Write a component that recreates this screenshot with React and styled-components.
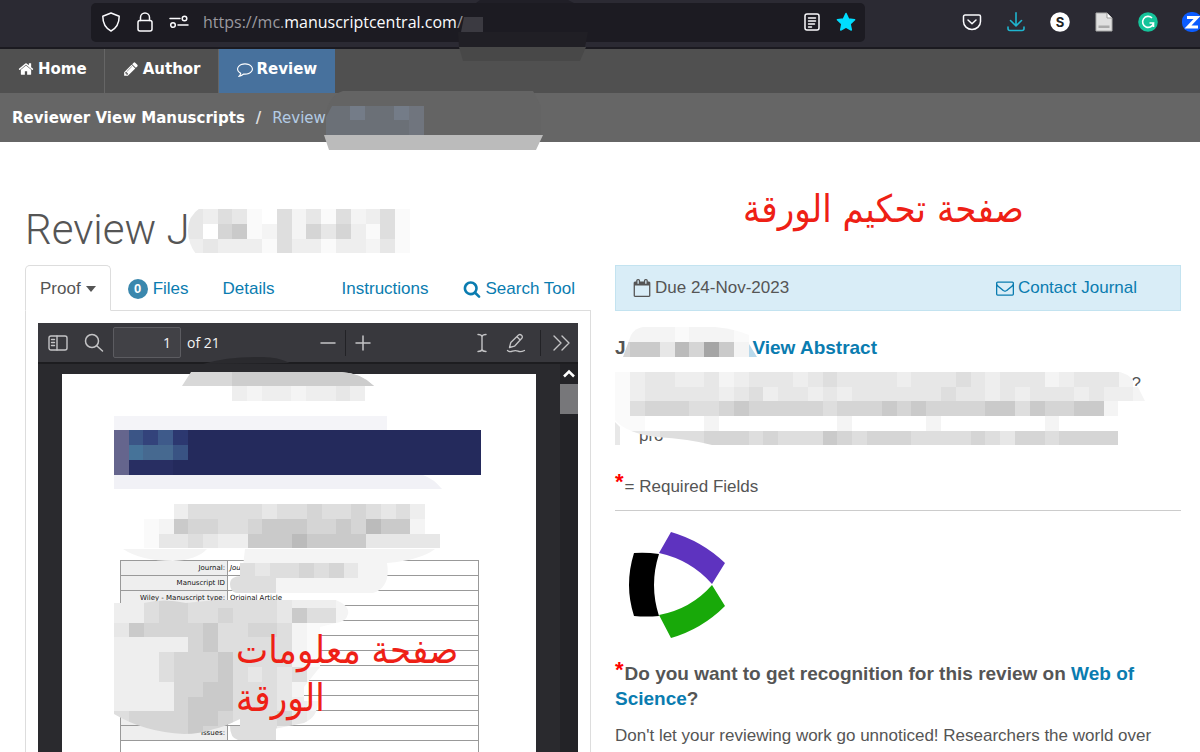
import React from 'react';
import styled, { createGlobalStyle } from 'styled-components';

const GlobalStyle = createGlobalStyle`
  * {
    box-sizing: border-box;
  }

  body {
    margin: 0;
    background: #fff;
    color: #555;
    font-family: 'Liberation Sans', Arial, sans-serif;
    font-size: 17px;
    line-height: 24px;
  }

  a {
    color: #0a7cb0;
    text-decoration: none;
  }

  button {
    padding: 0;
    border: none;
    background: none;
    color: inherit;
    font: inherit;
    cursor: pointer;
  }

  svg {
    display: block;
    flex: none;
  }
`;

const Window = styled.div`
  position: relative;
  height: 100vh;
  overflow: hidden;
`;

/* browser chrome */
const BrowserBar = styled.div`
  display: flex;
  align-items: center;
  justify-content: space-between;
  height: 49px;
  padding: 0 0 3px 91px;
  border-bottom: 2px solid #1b1a20;
  background: #2b2a33;
  color: #fbfbfe;
`;

const AddressBar = styled.div`
  display: flex;
  align-items: center;
  flex: 0 1 774px;
  height: 39px;
  padding: 0 9px 0 10px;
  gap: 14px;
  border-radius: 5px;
  background: #1c1b22;
`;

const Address = styled.div`
  flex: 1;
  color: #9a999f;
  font-family: 'Open Sans', 'Noto Sans', sans-serif;
  font-size: 16px;

  b {
    color: #fbfbfe;
    font-weight: 400;
  }
`;

const Extensions = styled.div`
  display: flex;
  align-items: center;
  gap: 24px;
  margin-right: -2px;
`;

/* site header */
const NavBar = styled.nav`
  display: flex;
  height: 44px;
  background: #505050;
`;

const NavLink = styled.a`
  display: flex;
  align-items: center;
  gap: 4px;
  height: 44px;
  padding: 0 17px 4px 18px;
  border-right: 1px solid ${props => (props.$active ? '#47719d' : '#666')};
  background: ${props => (props.$active ? '#47719d' : 'transparent')};
  color: #fff;
  font-family: 'DejaVu Sans', Verdana, sans-serif;
  font-size: 15px;
  font-weight: 700;
`;

const Breadcrumb = styled.div`
  display: flex;
  align-items: center;
  gap: 11px;
  height: 49px;
  padding-left: 12px;
  background: #666;
  color: #ddd;
  font-family: 'DejaVu Sans', Verdana, sans-serif;
  font-size: 15px;
  font-weight: 700;

  a {
    color: #fff;
  }

  span {
    color: #b3cbe4;
    font-weight: 400;
  }
`;

const Columns = styled.main`
  display: grid;
  grid-template-columns: 1fr 1fr;
  gap: 24px;
  padding: 0 19px 0 25px;
`;

const Column = styled.section`
  position: relative;
  min-width: 0;
  padding-top: ${props => props.$top}px;
`;

const Title = styled.h1`
  height: 60px;
  margin: 0;
  color: #555;
  font-family: Roboto, 'Open Sans', sans-serif;
  font-size: 42px;
  font-weight: 300;
  line-height: 50px;
`;

const Tabs = styled.div`
  display: flex;
  height: 46px;
  border-bottom: 1px solid #ddd;
`;

const Tab = styled.a`
  display: flex;
  align-items: center;
  gap: 5px;
  height: 46px;
  padding: ${props => (props.$active ? '2px 14px 0' : props.$last ? '2px 16px 0 17px' : '2px 17px 0')};
  margin-left: ${props => (props.$push ? 'auto' : '0')};
  border: 1px solid ${props => (props.$active ? '#ddd' : 'transparent')};
  border-bottom-color: ${props => (props.$active ? '#fff' : 'transparent')};
  border-width: ${props => (props.$active ? '1px' : '1px 0')};
  border-radius: 5px 5px 0 0;
  color: ${props => (props.$active ? '#555' : '#0a7cb0')};
`;

const Caret = styled.span`
  border: 5px solid transparent;
  border-top: 6px solid #555;
  border-bottom: 0;
`;

const Badge = styled.span`
  display: grid;
  place-items: center;
  width: 20px;
  height: 20px;
  border-radius: 10px;
  background: #3a87ad;
  color: #fff;
  font-size: 13px;
  font-weight: 700;
  line-height: 20px;
`;

const TabPanel = styled.div`
  padding: 12px;
  border: 1px solid #ddd;
  border-top: none;
`;

/* pdf viewer */
const Viewer = styled.div`
  background: #2a2a2e;
`;

const PdfToolbar = styled.div`
  display: flex;
  align-items: center;
  height: 41px;
  padding: 0 7px 0 10px;
  border-bottom: 2px solid #1d1d20;
  background: #38383d;
  color: #c4c4c6;
  font-family: 'Open Sans', 'Noto Sans', sans-serif;
  font-size: 14px;
`;

const ToolGroup = styled.div`
  display: flex;
  align-items: center;
  gap: ${props => props.$gap}px;
  margin-left: ${props => (props.$push ? 'auto' : '0')};
`;

const PageInput = styled.input`
  width: 68px;
  height: 31px;
  margin-left: 9px;
  padding: 0 9px;
  border: 1px solid #5c5c61;
  border-radius: 2px;
  background: #414146;
  color: #f4f4f4;
  font: inherit;
  text-align: right;
`;

const PageCount = styled.label`
  margin-left: 6px;
  color: #f4f4f4;
`;

const Divider = styled.span`
  width: 1px;
  height: 26px;
  background: #222226;
`;

const PdfBody = styled.div`
  display: flex;
  height: 640px;
`;

const Paper = styled.div`
  flex: 1;
  margin: 10px 24px 0;
  padding: 56px 55px 0 52px;
  background: #fff;
`;

const Banner = styled.div`
  height: 45px;
  background: #242a5c;
`;

const InfoTable = styled.table`
  width: calc(100% - 8px);
  margin: 85px 3px 0 6px;
  border: 1px solid #999;
  border-collapse: collapse;
  table-layout: fixed;
  color: #111;
  font-family: 'DejaVu Sans', Verdana, sans-serif;
  font-size: 7px;
  line-height: 14px;

  th,
  td {
    height: 15px;
    padding: 0 2px;
    border-bottom: 1px solid #999;
    text-align: left;
    white-space: nowrap;
  }

  th {
    width: 107px;
    border-right: 1px solid #999;
    background: #eee;
    font-weight: 400;
    text-align: right;
  }
`;

const Scrollbar = styled.div`
  display: flex;
  flex-direction: column;
  align-items: center;
  width: 18px;
  padding-top: 5px;
  gap: 6px;
  background: #232327;
`;

const Thumb = styled.div`
  width: 18px;
  height: 30px;
  background: #77777a;
`;

/* review form */
const DueBar = styled.div`
  display: flex;
  align-items: center;
  justify-content: space-between;
  height: 46px;
  padding: 0 43px 1px 17px;
  border: 1px solid #c3e3f0;
  background: #d9edf7;
`;

const IconText = styled.span`
  display: flex;
  align-items: center;
  gap: 4px;
`;

const Heading = styled.h2`
  display: flex;
  justify-content: space-between;
  width: 262px;
  margin: 25px 0 12px;
  font-size: 19px;
  line-height: 24px;
`;

const Abstract = styled.div`
  display: flex;
  flex-direction: column;
  align-items: flex-start;
  height: 76px;
  margin-right: 40px;
  padding-left: 24px;

  span:first-child {
    align-self: flex-end;
  }

  span:last-child {
    margin-top: 28px;
  }
`;

const Required = styled.p`
  margin: 27px 0 11px;
`;

const Star = styled.sup`
  margin-right: 1px;
  color: #f00;
  font-size: 22px;
  font-weight: 700;
  line-height: 0;
  vertical-align: 3px;
`;

const Rule = styled.hr`
  margin: 0 0 20px;
  border: 0;
  border-top: 1px solid #ccc;
`;

const Question = styled.h3`
  margin: 23px 0 13px;
  font-size: 19px;
  line-height: 25px;
`;

const Text = styled.p`
  margin: 0;
`;

/* pen marks and blurred areas lying over the page */
const Overlay = styled.svg`
  position: absolute;
  top: 0;
  left: 0;
  pointer-events: none;
`;

const Note = styled.div`
  position: absolute;
  top: ${props => props.$top}px;
  left: ${props => props.$left}px;
  color: #ee2015;
  font-family: 'DejaVu Sans Condensed', 'DejaVu Sans', sans-serif;
  font-size: 38px;
  line-height: 48px;
  white-space: nowrap;
`;

const SHADES = ['#fff', '#fafafa', '#f4f4f4', '#eee', '#e7e7e7', '#dedede', '#d5d5d5', '#cacaca', '#bbb', '#a5a5a5'];
const CELL = 14.8;

// every digit is one cell, a dot leaves it clear
const Mosaic = ({ x, y, rows, clip }) => (
  <g clipPath={clip ? `url(#${clip})` : undefined} shapeRendering="crispEdges">
    {rows.map((row, r) =>
      [...row].map((shade, c) =>
        shade === '.' ? null : (
          <rect
            key={`${r}-${c}`}
            x={x + c * CELL}
            y={y + r * CELL}
            width={CELL}
            height={CELL}
            fill={SHADES[shade]}
          />
        )
      )
    )}
  </g>
);

const PATHS = {
  home: 'M1472 992v480q0 26-19 45t-45 19h-384v-384h-256v384h-384q-26 0-45-19t-19-45v-480q0-1 .5-3t.5-3l575-474 575 474q1 2 1 6zm223-69l-62 74q-8 9-21 11h-3q-13 0-21-7l-692-577-692 577q-12 8-24 7-13-2-21-11l-62-74q-8-10-7-23.5t11-21.5l719-599q32-26 76-26t76 26l244 204v-195q0-14 9-23t23-9h192q14 0 23 9t9 23v408l219 182q10 8 11 21.5t-7 23.5z',
  pencil: 'M491 1536l91-91-235-235-91 91v107h128v128h107zm523-928q0-22-22-22-10 0-17 7l-542 542q-7 7-7 17 0 22 22 22 10 0 17-7l542-542q7-7 7-17zm-54-192l416 416-832 832h-416v-416zm683 96q0 53-37 90l-166 166-416-416 166-165q36-38 90-38 53 0 91 38l235 234q37 39 37 91z',
  comment: 'M896 384q-204 0-381.5 69.5t-282 187.5-104.5 255q0 112 71.5 213.5t201.5 175.5l87 50-27 96q-24 91-70 172 152-63 275-171l43-38 57 6q69 8 130 8 204 0 381.5-69.5t282-187.5 104.5-255-104.5-255-282-187.5-381.5-69.5zM1792 896q0 174-120 321.5t-326 233-450 85.5q-70 0-145-8-198 175-460 242-49 14-114 22h-5q-15 0-27-10.5t-16-27.5v-1q-3-4-.5-12t2-10 4.5-9.5l6-9 7-8.5 8-9q7-8 31-34.5t34.5-38 31-39.5 32.5-51 27-59 26-76q-157-89-247.5-220t-90.5-281q0-174 120-321.5t326-233 450-85.5 450 85.5 326 233 120 321.5z',
  search: 'M1216 832q0-185-131.5-316.5t-316.5-131.5-316.5 131.5-131.5 316.5 131.5 316.5 316.5 131.5 316.5-131.5 131.5-316.5zm512 832q0 52-38 90t-90 38q-54 0-90-38l-343-342q-179 124-399 124-143 0-273.5-55.5t-225-150-150-225-55.5-273.5 55.5-273.5 150-225 225-150 273.5-55.5 273.5 55.5 225 150 150 225 55.5 273.5q0 220-124 399l343 343q37 37 37 90z',
  calendar: 'M192 1664h1408v-1024h-1408v1024zm384-1216v-288q0-14-9-23t-23-9h-64q-14 0-23 9t-9 23v288q0 14 9 23t23 9h64q14 0 23-9t9-23zm768 0v-288q0-14-9-23t-23-9h-64q-14 0-23 9t-9 23v288q0 14 9 23t23 9h64q14 0 23-9t9-23zm384-64v1280q0 52-38 90t-90 38h-1408q-52 0-90-38t-38-90v-1280q0-52 38-90t90-38h128v-96q0-66 47-113t113-47h64q66 0 113 47t47 113v96h384v-96q0-66 47-113t113-47h64q66 0 113 47t47 113v96h128q52 0 90 38t38 90z',
  envelope: 'M1664 1504v-768q-32 36-69 66-268 206-426 338-51 43-83 67t-86.5 48.5-102.5 24.5h-2q-48 0-102.5-24.5t-86.5-48.5-83-67q-158-132-426-338-37-30-69-66v768q0 13 9.5 22.5t22.5 9.5h1472q13 0 22.5-9.5t9.5-22.5zm0-1051v-24.5l-.5-13-3-12.5-5.5-9-9-7.5-14-2.5h-1472q-13 0-22.5 9.5t-9.5 22.5q0 168 147 284 193 152 401 317 6 5 35 29.5t46 37.5 44.5 31.5 50.5 27.5 43 9h2q20 0 43-9t50.5-27.5 44.5-31.5 46-37.5 35-29.5q208-165 401-317 54-43 100.5-115.5t46.5-131.5zm128-37v1088q0 66-47 113t-113 47h-1472q-66 0-113-47t-47-113v-1088q0-66 47-113t113-47h1472q66 0 113 47t47 113z',
};

const Glyph = ({ name, size = 16 }) => (
  <svg width={size} height={size} viewBox="0 0 1792 1792" fill="currentColor" aria-hidden="true">
    <path d={PATHS[name]} />
  </svg>
);

const Line = ({ children, size = 20, color = 'currentColor', width = 1.5 }) => (
  <svg
    width={size}
    height={size}
    viewBox="0 0 20 20"
    fill="none"
    stroke={color}
    strokeWidth={width}
    strokeLinecap="round"
    strokeLinejoin="round"
    aria-hidden="true"
  >
    {children}
  </svg>
);

const Toolbar = () => (
  <BrowserBar>
    <AddressBar>
      <Line>
        <path d="M10 1l8.200 3.200c0 7-2 11.500-8.200 14.800-6.200-3.300-8.200-7.800-8.200-14.800z" />
      </Line>
      <Line>
        <rect x="3" y="8.500" width="14" height="10.500" rx="2" />
        <path d="M5.500 8.500V5.500a4.500 4.500 0 0 1 9 0v3" />
      </Line>
      <Line>
        <path d="M1 6.500h10M9 13h10" />
        <circle cx="15.500" cy="6.500" r="2.300" />
        <circle cx="4" cy="13" r="2.300" />
      </Line>
      <Address>
        https://mc.<b>manuscriptcentral.com</b>/
      </Address>
      <Line>
        <rect x="3" y="2" width="14" height="16" rx="2" />
        <path d="M6.500 6h7M6.500 9h7M6.500 12h6M6.500 15h3" />
      </Line>
      <Line color="#00ddff">
        <path
          d="M10 1.500l2.600 5.600 6 .7-4.500 4.100 1.200 6.100-5.300-3-5.300 3 1.200-6.100-4.500-4.100 6-.7z"
          fill="#00ddff"
        />
      </Line>
    </AddressBar>
    <Extensions>
      <Line>
        <path d="M3 3h14a1.500 1.500 0 0 1 1.500 1.500v5a8.500 8 0 0 1-17 0v-5a1.500 1.500 0 0 1 1.500-1.500z" />
        <path d="M6 8l4 3.800 4-3.800" />
      </Line>
      <Line color="#1fb5cf" width={1.6}>
        <path d="M10 .8v13M4.500 8.500l5.500 5.300 5.500-5.300M2 15v1.500a2 2 0 0 0 2 2h12a2 2 0 0 0 2-2V15" />
      </Line>
      <svg width="20" height="20" viewBox="0 0 20 20">
        <circle cx="10" cy="10" r="9.800" fill="#fff" />
        <text x="10" y="14.500" fill="#222" fontFamily="Inter" fontSize="13" fontWeight="700" textAnchor="middle">S</text>
      </svg>
      <svg width="20" height="20" viewBox="0 0 20 20">
        <path d="M2 1h11l5 5v13H2z" fill="#e0e0e0" stroke="#aaa" />
        <path d="M13 1v5h5" fill="#fff" stroke="#999" />
        <path d="M4.500 13.500h11v2.500h-11z" fill="#aaa" />
      </svg>
      <svg width="20" height="20" viewBox="0 0 20 20" fill="none">
        <circle cx="10" cy="10" r="9.800" fill="#15c39a" />
        <path d="M14 6a5.500 5.500 0 1 0 1.500 5h-4M15.500 11v4" stroke="#fff" strokeWidth="1.600" />
      </svg>
      <svg width="20" height="20" viewBox="0 0 20 20" fill="none">
        <rect width="20" height="20" rx="9" fill="#0b5cff" />
        <path d="M5 5.500h10l-9 9.500h10" stroke="#fff" strokeWidth="3" />
      </svg>
    </Extensions>
  </BrowserBar>
);

const HeaderMarks = () => (
  <Overlay width="600" height="160" viewBox="0 0 600 160" aria-hidden="true">
    <path d="M480 0h88l6 3h-98z" fill="#201f27" />
    <path d="M464 17h19v15h-22z" fill="#3b3a41" />
    <path d="M458 32h130l-3 15H459z" fill="#201f25" />
    <path d="M459 47h127l-6 14H463z" fill="#484848" />
    <path d="M343 91h190l8 15v29H326v-23q4-17 17-21z" fill="#646464" />
    <path d="M332 106h92v29h-98v-18z" fill="#6b7077" />
    <path d="M350 106h15v14h-15zM394 106h15v14h-15z" fill="#747c88" />
    <path d="M409 106h15v29h-15z" fill="#70757e" />
    <path d="M324 135h219l-7 15H329z" fill="#bbb" />
  </Overlay>
);

const ProofMarks = () => (
  <Overlay width="566" height="610" viewBox="25 142 566 610" aria-hidden="true">
    <defs>
      <clipPath id="title">
        <path d="M200 208h210v46H196q-8-10-8-24t12-22z" />
      </clipPath>
      <clipPath id="info">
        <path d="M114 603h30q20-5 42 0l30-3h120q14 6 12 14t-12 9l-16 4v40l-16 20v14h14q0 16-14 22l-30 6h-34v-10q-16 8-26 10-14 5-30 5-40-2-70-20z" />
      </clipPath>
    </defs>
    <Mosaic
      x={188}
      y={209}
      clip="title"
      rows={['435410524152351', '406712526463151', '343331533133241']}
    />
    <path d="M203 364q25-8 60-7 15 0 27 6z" fill="#2a2a2e" />
    <path d="M182 386l9-14h150q20 1 33 14z" fill="#d8d8d8" />
    <path d="M232 372h109q20 1 33 14H232z" fill="#cdcdcd" />
    <Mosaic x={232} y={386} rows={['323323343']} />
    <path d="M114 416h273v14H114z" fill="#f4f4f8" />
    <path d="M114 475h309q11 4 19 14H114z" fill="#f1f1f6" />
    <g shapeRendering="crispEdges">
      <path d="M114 430h15v45h-15z" fill="#65658d" />
      <path d="M129 430h14v15h-14z" fill="#3b5586" />
      <path d="M143 430h15v15h-15z" fill="#33437b" />
      <path d="M158 430h15v15h-15z" fill="#3e5a8a" />
      <path d="M173 430h15v15h-15z" fill="#2c3870" />
      <path d="M129 445h14v15h-14z" fill="#467399" />
      <path d="M143 445h30v15h-30z" fill="#466990" />
      <path d="M173 445h15v15h-15z" fill="#395383" />
      <path d="M129 460h44v15h-44z" fill="#282e62" />
    </g>
    <Mosaic
      x={144}
      y={504}
      rows={['..35555545565565453', '1276655677766768772', '14454337778777744444']}
    />
    <path d="M123 549h84q-10 11-34 12-32 0-50-12zM245 549h190q-14 11-48 14 4 24-14 30H240z" fill="#f4f4f4" />
    <Mosaic x={240} y={563} rows={['54556564', '22222222']} />
    <path d="M230 584q0-8 12-8h34v17h-40q-6-2-6-9z" fill="#dedede" />
    <Mosaic
      x={114.3}
      y={593}
      clip="info"
      rows={[
        '3356655555543332',
        '3356655655547552',
        '476666755665211',
        '33333675555521',
        '33356667555521',
        '33356667545452',
        '33336677555422',
        '33336777555432',
        '56666776555643',
        '56666766555333',
      ]}
    />
    <path d="M230 726h46v14h-38q-8-2-8-14z" fill="#dedede" />
  </Overlay>
);

const ReviewMarks = () => (
  <Overlay width="566" height="610" viewBox="615 142 566 610" aria-hidden="true">
    <defs>
      <clipPath id="manuscript">
        <path d="M623 357l8-22q4-7 12-8h72q20 2 34 8v22z" />
      </clipPath>
      <clipPath id="abstract">
        <path d="M615 371h500q12 1 21 12l9 18h-27v44H712q-22-6-56-8-30-4-41-17z" />
      </clipPath>
    </defs>
    <Mosaic x={615.3} y={327} clip="manuscript" rows={['222212221', '677486972']} />
    <path d="M749 344l8 13h-8z" fill="#b9d9eb" />
    <Mosaic
      x={615.3}
      y={371.7}
      clip="abstract"
      rows={[
        '13443342344434544443444543444234442',
        '134444434534434344444454434344434332',
        '1566655676666656667676666775766772',
        '11000020000000020000020000000200002',
        '3445556665655576566655556546656666',
      ]}
    />
    <path d="M615 422l5 5v18h-5z" fill="#e8e8e8" />
  </Overlay>
);

const PdfViewer = () => (
  <Viewer>
    <PdfToolbar>
      <ToolGroup $gap={16}>
        <button aria-label="Toggle sidebar">
          <Line width={1.4}>
            <rect x="1" y="3" width="18" height="14" rx="2" />
            <path d="M9 3v14M3.500 6.500h3M3.500 9.500h3M3.500 12.500h3" />
          </Line>
        </button>
        <button aria-label="Find">
          <Line width={1.5}>
            <circle cx="8" cy="8" r="6.500" />
            <path d="M13 13l5.500 5" />
          </Line>
        </button>
      </ToolGroup>
      <PageInput id="page" defaultValue="1" />
      <PageCount htmlFor="page">of 21</PageCount>
      <ToolGroup $gap={7} $push>
        <button aria-label="Zoom out">
          <Line><path d="M3 10h14" /></Line>
        </button>
        <Divider />
        <button aria-label="Zoom in">
          <Line><path d="M3 10h14M10 3v14" /></Line>
        </button>
      </ToolGroup>
      <ToolGroup $gap={14} $push>
        <button aria-label="Text">
          <Line width={1.4}>
            <path d="M6 1.500q3.500 0 4 2 .5-2 4-2M10 3.500v13M6 18.500q3.500 0 4-2 .5 2 4 2" />
          </Line>
        </button>
        <button aria-label="Draw">
          <Line width={1.3}>
            <path d="M3.500 14.500l1.300-5 7.700-7.500q1.500-1.200 3 .3t.3 3L8.500 13.200zM11 3.800l3.200 3.200M1.500 17.500q2 2 5 .7t5.500 0 6.500-.7" />
          </Line>
        </button>
        <ToolGroup $gap={10}>
          <Divider />
          <button aria-label="Tools">
            <Line width={1.4}><path d="M3 3l7 7-7 7M11 3l7 7-7 7" /></Line>
          </button>
        </ToolGroup>
      </ToolGroup>
    </PdfToolbar>
    <PdfBody>
      <Paper>
        <Banner />
        <InfoTable>
          <tbody>
            <tr><th>Journal:</th><td><i>Jou</i></td></tr>
            <tr><th>Manuscript ID</th><td /></tr>
            <tr><th>Wiley - Manuscript type:</th><td>Original Article</td></tr>
            {[...Array(8)].map((_, i) => (
              <tr key={i}><th /><td /></tr>
            ))}
            <tr><th>Issues:</th><td /></tr>
            <tr><td colSpan="2" /></tr>
          </tbody>
        </InfoTable>
      </Paper>
      <Scrollbar>
        <svg width="12" height="9" viewBox="0 0 12 9" fill="none" stroke="#fff" strokeWidth="2.500">
          <path d="M1 7.500l5-5 5 5" />
        </svg>
        <Thumb />
      </Scrollbar>
    </PdfBody>
  </Viewer>
);

const Logo = () => (
  <svg width="126" height="107" viewBox="615 531 126 107" role="img" aria-label="Web of Science">
    <path d="M671 532q31 9 54 31l-13 21q-21-24-53-31z" fill="#5e33bf" />
    <path d="M712 585l13 21q-23 23-54 32l-12-23q32-6 53-30z" fill="#18a909" />
    <path d="M634 553q12-1 25 1-10 31 0 62-13 1-25 0-10-31 0-63z" fill="#000" />
  </svg>
);

const App = () => (
  <Window>
    <GlobalStyle />
    <Toolbar />
    <NavBar>
      <NavLink href="#home"><Glyph name="home" />Home</NavLink>
      <NavLink href="#author"><Glyph name="pencil" />Author</NavLink>
      <NavLink href="#review" $active><Glyph name="comment" />Review</NavLink>
    </NavBar>
    <Breadcrumb>
      <a href="#manuscripts">Reviewer View Manuscripts</a>/<span>Review</span>
    </Breadcrumb>
    <HeaderMarks />
    <Columns>
      <Column $top={63}>
        <Title>Review J</Title>
        <Tabs>
          <Tab href="#proof" $active>Proof<Caret /></Tab>
          <Tab href="#files"><Badge>0</Badge>Files</Tab>
          <Tab href="#details">Details</Tab>
          <Tab href="#instructions" $push>Instructions</Tab>
          <Tab href="#search" $last><Glyph name="search" size={18} />Search Tool</Tab>
        </Tabs>
        <TabPanel>
          <PdfViewer />
        </TabPanel>
        <ProofMarks />
        <Note $top={484} $left={211} lang="ar">صفحة معلومات<br />الورقة</Note>
      </Column>
      <Column $top={123}>
        <DueBar>
          <IconText><Glyph name="calendar" size={18} />Due 24-Nov-2023</IconText>
          <a href="#contact"><IconText><Glyph name="envelope" size={18} />Contact Journal</IconText></a>
        </DueBar>
        <Heading>J<a href="#abstract">View Abstract</a></Heading>
        <Abstract>
          <span>?</span>
          <span>pro</span>
        </Abstract>
        <Required><Star>*</Star>= Required Fields</Required>
        <Rule />
        <Logo />
        <Question>
          <Star>*</Star>Do you want to get recognition for this review on <a href="#wos">Web of Science</a>?
        </Question>
        <Text>Don't let your reviewing work go unnoticed! Researchers the world over</Text>
        <ReviewMarks />
        <Note $top={43} $left={128} lang="ar">صفحة تحكيم الورقة</Note>
      </Column>
    </Columns>
  </Window>
);

export default App;
